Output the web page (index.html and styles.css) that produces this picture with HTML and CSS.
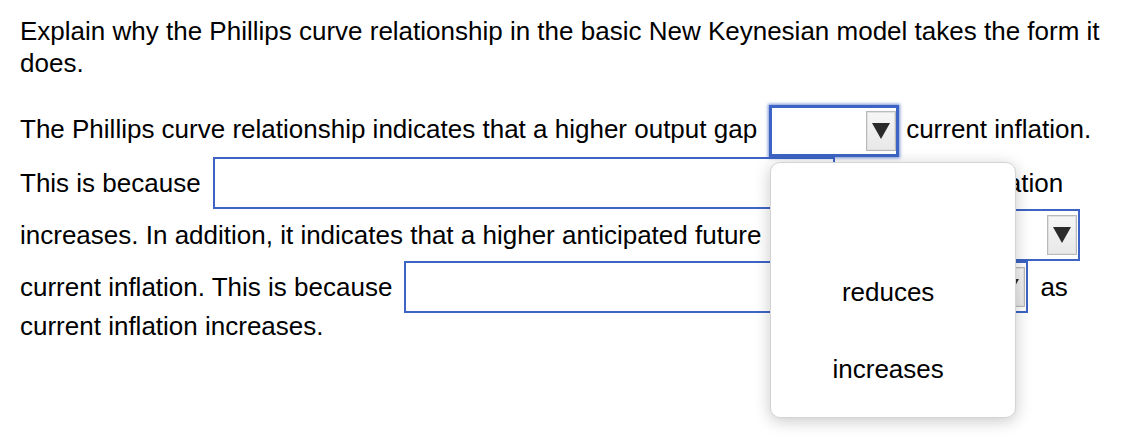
FILE: index.html
```html
<!DOCTYPE html>
<html lang="en">
<head>
<meta charset="utf-8">
<title>Phillips curve question</title>
<link rel="stylesheet" href="styles.css">
</head>
<body>
<div class="page">
  <p class="question">Explain why the Phillips curve relationship in the basic New Keynesian model takes the form it does.</p>
  <div class="answer">
    <div class="row row-first">
      <span class="txt txt-lift">The Phillips curve relationship indicates that a higher output gap</span>
      <div class="select select-focus sel-narrow">
        <span class="arrow"></span>
        <ul class="menu">
          <li class="opt"></li>
          <li class="opt">reduces</li>
          <li class="opt">increases</li>
        </ul>
      </div>
      <span class="txt after-tight txt-lift">current inflation.</span>
    </div>
    <div class="row">
      <span class="txt">This is because</span>
      <span class="field field-a"></span>
      <span class="txt after-hidden">as current inflation</span>
    </div>
    <div class="row">
      <span class="txt">increases. In addition, it indicates that a higher anticipated future</span>
      <div class="select sel-wide"><span class="arrow"></span></div>
    </div>
    <div class="row">
      <span class="txt">current inflation. This is because</span>
      <span class="field field-b"></span>
      <div class="select sel-narrow"><span class="arrow"></span></div>
      <span class="txt after">as</span>
    </div>
    <p class="tail">current inflation increases.</p>
  </div>
</div>
</body>
</html>
```

FILE: styles.css
```css
* { box-sizing: border-box; }

html, body {
  margin: 0;
  padding: 0;
  background: #ffffff;
}

body {
  font-family: "Liberation Sans", Arial, Helvetica, sans-serif;
  font-size: 26px;
  color: #000000;
  min-height: 448px;
}

.page {
  width: 1120px;
  min-height: 448px;
  padding: 15px 0 0 20px;
}

.question {
  margin: 0;
  width: 1095px;
  line-height: 32px;
}

.answer {
  margin-top: 26px;
}

.row {
  display: flex;
  align-items: center;
  height: 52px;
}

.txt {
  line-height: 32px;
  white-space: nowrap;
}

.txt-lift {
  margin-bottom: 4px;
}

.after-tight { margin-left: 7px; }
.after { margin-left: 12px; }
.after-hidden { margin-left: 16px; }

.field {
  display: block;
  height: 52px;
  border: 2px solid #3d64c4;
  background: #ffffff;
  margin-left: 12px;
}

.field-a { width: 622px; }
.field-b { width: 482px; }

.select {
  position: relative;
  display: flex;
  justify-content: flex-end;
  align-items: center;
  height: 52px;
  border: 2px solid #3d64c4;
  background: #ffffff;
  margin-left: 12px;
  padding-right: 1px;
}

.select-focus {
  border-width: 3px;
  padding-right: 0;
  box-shadow: 0 0 3px 1px rgba(61, 100, 196, 0.7);
}

.sel-narrow { width: 130px; }
.sel-wide { width: 307px; }

.arrow {
  display: flex;
  align-items: center;
  justify-content: center;
  width: 30px;
  height: 40px;
  border: 1px solid #bababa;
  box-shadow: inset 0 0 0 1px #e0e0e0;
  background: linear-gradient(#f6f6f6, #e8e8e8);
}

.arrow::after {
  content: "";
  width: 0;
  height: 0;
  border-left: 9px solid transparent;
  border-right: 9px solid transparent;
  border-top: 16px solid #2b2b2b;
}

.menu {
  position: absolute;
  z-index: 10;
  top: calc(100% + 8px);
  left: -2px;
  width: 246px;
  margin: 0;
  padding: 14px 10px 9px 0;
  list-style: none;
  background: #ffffff;
  border: 1px solid #d4d4d4;
  border-radius: 10px;
  box-shadow: 0 3px 16px rgba(0, 0, 0, 0.22);
}

.opt {
  height: 77px;
  line-height: 77px;
  text-align: center;
  white-space: nowrap;
}

.tail {
  margin: -3px 0 0 0;
  line-height: 32px;
}
```
